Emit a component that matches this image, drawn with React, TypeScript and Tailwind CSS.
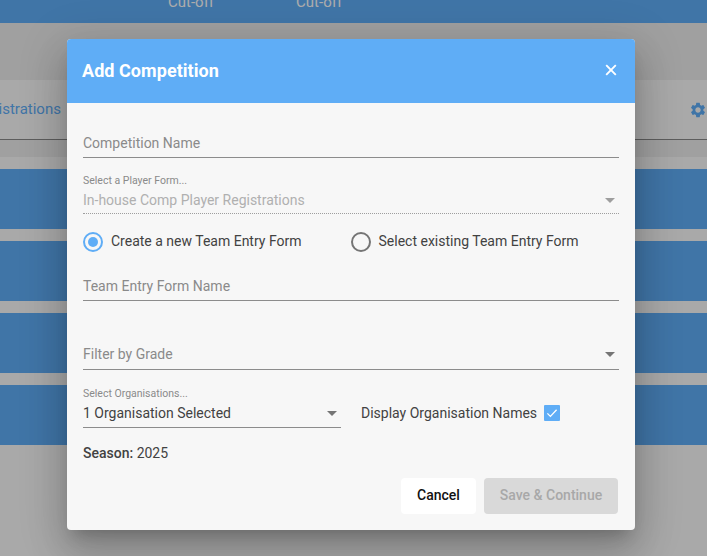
import React from "react";

const Caret = ({ color, className = "" }: { color: string; className?: string }) => (
  <span className={`ml-auto mr-[4px] h-0 w-0 border-x-[5px] border-t-[5px] border-x-transparent ${className}`} style={{ borderTopColor: color }} />
);

export default function App() {
  return (
    <div className="relative h-[556px] w-[707px] overflow-hidden bg-[#fafafa] text-[14px] font-['Roboto',sans-serif] text-[#424242]">
      {/* Page behind */}
      <div className="flex h-[23px] items-end gap-[82px] overflow-hidden bg-[#5fadf6] pl-[168px] text-[15px] leading-[20px] text-white">
        <span className="mb-[11px]">Cut-off</span>
        <span className="mb-[11px]">Cut-off</span>
      </div>
      <div className="h-[57px] bg-[#ececec]" />
      <div className="flex h-[60px] items-center justify-between overflow-hidden border-b border-[#8a8a8a] bg-[#fafafa]">
        <span className="-ml-[72px] text-[15px] text-[#5fadf6]">Player Registrations</span>
        <svg viewBox="0 0 24 24" className="h-[18px] w-[18px] fill-[#5fadf6]">
          <path d="M19.14 12.94c.04-.3.06-.61.06-.94 0-.32-.02-.64-.07-.94l2.03-1.58a.49.49 0 0 0 .12-.61l-1.92-3.32a.488.488 0 0 0-.59-.22l-2.39.96c-.5-.38-1.03-.7-1.62-.94l-.36-2.54a.484.484 0 0 0-.48-.41h-3.84c-.24 0-.43.17-.47.41l-.36 2.54c-.59.24-1.13.57-1.62.94l-2.39-.96c-.22-.08-.47 0-.59.22L2.74 8.87c-.12.21-.08.47.12.61l2.03 1.58c-.05.3-.09.63-.09.94s.02.64.07.94l-2.03 1.58a.49.49 0 0 0-.12.61l1.92 3.32c.12.22.37.29.59.22l2.39-.96c.5.38 1.03.7 1.62.94l.36 2.54c.05.24.24.41.48.41h3.84c.24 0 .44-.17.47-.41l.36-2.54c.59-.24 1.13-.56 1.62-.94l2.39.96c.22.08.47 0 .59-.22l1.92-3.32c.12-.22.07-.47-.12-.61l-2.01-1.58zM12 15.6c-1.98 0-3.6-1.62-3.6-3.6s1.62-3.6 3.6-3.6 3.6 1.62 3.6 3.6-1.62 3.6-3.6 3.6z" />
        </svg>
      </div>
      <div className="h-[17px] bg-[#ececec]" />
      <div className="flex flex-col gap-[12px] pt-[12px]">
        <div className="h-[60px] bg-[#5fadf6]" />
        <div className="h-[60px] bg-[#5fadf6]" />
        <div className="h-[60px] bg-[#5fadf6]" />
        <div className="h-[60px] bg-[#5fadf6]" />
      </div>

      {/* Backdrop */}
      <div className="absolute inset-0 bg-[rgba(0,0,0,0.32)]" />

      {/* Dialog */}
      <div className="absolute left-[67px] top-[39px] flex h-[491px] w-[568px] flex-col overflow-hidden rounded-[4px] bg-[#f7f7f7] shadow-[0_11px_15px_-7px_rgba(0,0,0,0.2),0_24px_38px_3px_rgba(0,0,0,0.14),0_9px_46px_8px_rgba(0,0,0,0.12)]">
        <div className="flex h-[64px] items-center justify-between bg-[#5fadf6] pb-[2px] pl-[15px] pr-[18px]">
          <span className="text-[18px] font-bold tracking-[0.05px] text-white">Add Competition</span>
          <svg viewBox="0 0 12 12" className="h-[12px] w-[12px] stroke-white stroke-[1.9]">
            <path d="M1.2 1.2 10.8 10.8M10.8 1.2 1.2 10.8" />
          </svg>
        </div>

        <div className="flex flex-1 flex-col px-[16px]">
          <div className="mt-[30px] h-[25px] border-b border-[#8c8c8c] text-[#8a8a8a]">Competition Name</div>

          <div className="mt-[16px] flex h-[40px] flex-col border-b border-dotted border-[#9e9e9e]">
            <span className="text-[10.5px] leading-[14px] text-[#8a8a8a]">Select a Player Form...</span>
            <div className="mt-[2px] flex items-center text-[#b0b0b0]">
              <span className="leading-[20px]">In-house Comp Player Registrations</span>
              <Caret color="#9e9e9e" />
            </div>
          </div>

          <div className="mt-[17px] flex h-[22px] items-center">
            <span className="flex h-[20px] w-[20px] items-center justify-center rounded-full border-2 border-[#5fadf6]">
              <span className="h-[10px] w-[10px] rounded-full bg-[#5fadf6]" />
            </span>
            <span className="ml-[8px] pb-px">Create a new Team Entry Form</span>
            <span className="ml-[49px] h-[20px] w-[20px] rounded-full border-2 border-[#757575]" />
            <span className="ml-[8px] pb-px">Select existing Team Entry Form</span>
          </div>

          <div className="mt-[23px] h-[25px] border-b border-[#8c8c8c] text-[#8a8a8a]">Team Entry Form Name</div>

          <div className="mt-[43px] flex h-[26px] items-start border-b border-[#8c8c8c] text-[#8a8a8a]">
            <span>Filter by Grade</span>
            <Caret color="#757575" className="mt-[8px]" />
          </div>

          <div className="mt-[17px] flex items-end">
            <div className="flex h-[41px] w-[258px] flex-col border-b border-[#8c8c8c]">
              <span className="text-[10.5px] leading-[14px] text-[#8a8a8a]">Select Organisations...</span>
              <div className="mt-[2px] flex items-center">
                <span className="leading-[20px]">1 Organisation Selected</span>
                <Caret color="#757575" />
              </div>
            </div>
            <div className="mb-[5px] ml-[20px] flex items-center">
              <span className="leading-[20px]">Display Organisation Names</span>
              <span className="ml-[7px] flex h-[16px] w-[16px] items-center justify-center rounded-[1px] bg-[#5fadf6]">
                <svg viewBox="0 0 16 16" className="h-[16px] w-[16px] fill-none stroke-white stroke-[1.3]">
                  <path d="M3.4 8.4 6.4 11.4 12.6 4.8" />
                </svg>
              </span>
            </div>
          </div>

          <div className="mt-[15px] leading-[20px]">
            <span className="font-medium">Season:</span> 2025
          </div>

          <div className="mt-[15px] flex justify-end gap-[8px] pr-px">
            <button className="h-[36px] w-[75px] rounded-[4px] bg-white pb-px font-medium text-[#111]">Cancel</button>
            <button className="h-[36px] w-[134px] rounded-[4px] bg-[#d9d9d9] pb-px font-medium text-[#a8a8a8]">Save &amp; Continue</button>
          </div>
        </div>
      </div>
    </div>
  );
}
